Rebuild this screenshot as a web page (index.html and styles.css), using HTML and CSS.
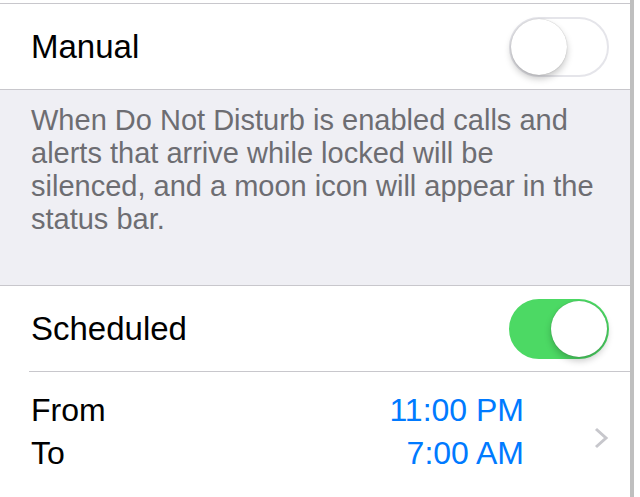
FILE: index.html
```html
<!DOCTYPE html>
<html lang="en">
<head>
  <meta charset="UTF-8" />
  <meta name="viewport" content="width=device-width, initial-scale=1.0" />
  <title>Do Not Disturb</title>
  <link rel="stylesheet" href="styles.css">
</head>
<body>
  <div class="screen">
    <div class="settings">
      <div class="group">
        <div class="row">
          <span class="label">Manual</span>
          <div class="switch"><div class="knob"></div></div>
        </div>
      </div>

      <p class="footer">When Do Not Disturb is enabled calls and alerts that arrive while locked will be silenced, and a moon icon will appear in the status bar.</p>

      <div class="group">
        <div class="row">
          <span class="label">Scheduled</span>
          <div class="switch on"><div class="knob"></div></div>
        </div>
        <div class="row times">
          <div class="time-labels">
            <span>From</span>
            <span>To</span>
          </div>
          <div class="time-values">
            <span>11:00 PM</span>
            <span>7:00 AM</span>
          </div>
          <svg class="chevron" width="16" height="24" viewBox="0 0 16 24">
            <polyline points="3,3 13,12 3,21" fill="none" stroke="#c7c7cc" stroke-width="3" />
          </svg>
        </div>
      </div>
    </div>
    <div class="edge"></div>
  </div>
</body>
</html>
```

FILE: styles.css
```css
body {
  margin: 0;
  font-family: 'Liberation Sans', Arial, sans-serif;
  background: white;
  color: black;
}
.screen {
  display: flex;
  height: 497px;
  overflow: hidden;
}
.settings {
  flex: 1;
  padding-top: 3px;
}
.edge {
  width: 4px;
  background: #bfbfbf;
  margin-right: 6px;
}
.group {
  background: white;
  border-top: 1px solid #c8c7cc;
  border-bottom: 1px solid #c8c7cc;
}
.group:last-child {
  border-bottom: none;
}
.row {
  display: flex;
  align-items: center;
  justify-content: space-between;
  height: 85px;
  padding: 0 21px 0 31px;
}
.row + .row {
  border-top: 1px solid #c8c7cc;
  margin-left: 29px;
  padding-left: 2px;
}
.label {
  font-size: 33px;
}
.switch {
  width: 100px;
  height: 60px;
  box-sizing: border-box;
  border: 2px solid #e5e5ea;
  border-radius: 30px;
  background: white;
  position: relative;
}
.knob {
  position: absolute;
  top: 0;
  left: 0;
  width: 56px;
  height: 56px;
  border-radius: 50%;
  background: white;
  box-shadow: 0 4px 7px rgba(0, 0, 0, 0.22), 0 0 1px rgba(0, 0, 0, 0.3);
}
.switch.on {
  background: #4cd964;
  border-color: #4cd964;
}
.switch.on .knob {
  left: auto;
  right: 0;
}
.footer {
  margin: 0;
  background: #efeff4;
  color: #6d6d72;
  font-size: 29px;
  line-height: 33px;
  padding: 14px 26px 49px 31px;
}
.row.times {
  height: auto;
  align-items: center;
  padding-top: 17px;
  padding-bottom: 20px;
}
.time-labels,
.time-values {
  display: flex;
  flex-direction: column;
  font-size: 32px;
  line-height: 43px;
}
.time-labels {
  flex: 1;
}
.time-values {
  color: #007aff;
  text-align: right;
  margin-right: 69px;
}
.chevron {
  margin-top: 12px;
}
```
